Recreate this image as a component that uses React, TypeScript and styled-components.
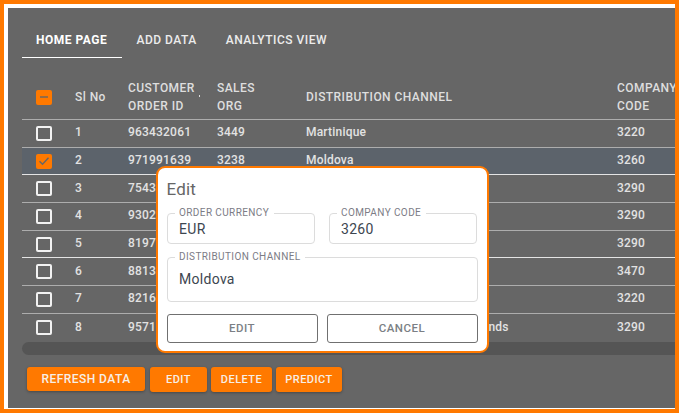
import * as React from 'react';
import styled, { createGlobalStyle } from 'styled-components';

const orange = '#ff7900';

const GlobalStyle = createGlobalStyle`
  html, body {
    margin: 0;
    padding: 0;
    background: #fff;
    font-family: Roboto, "Liberation Sans", sans-serif;
  }
`;

const Frame = styled.div`
  position: relative;
  box-sizing: border-box;
  width: 679px;
  height: 413px;
  overflow: hidden;
  border: 4px solid ${orange};
  padding: 4px 0 1px 4px;
  background: #fff;
`;

const Panel = styled.div`
  box-sizing: border-box;
  height: 100%;
  padding: 0 0 0 14px;
  background: #666;
  overflow: hidden;
`;

const Tabs = styled.nav`
  display: flex;
  height: 50px;
`;

const Tab = styled.div<{ $active?: boolean }>`
  box-sizing: border-box;
  height: 50px;
  padding: 25px 14.5px 0;
  font-size: 12px;
  line-height: 14px;
  font-weight: ${p => (p.$active ? 700 : 500)};
  letter-spacing: 0.5px;
  white-space: nowrap;
  color: ${p => (p.$active ? '#fff' : '#ececec')};
  border-bottom: ${p => (p.$active ? '1px solid #fff' : '1px solid transparent')};
  &:first-child {
    width: 100px;
    padding-left: 14px;
  }
`;

const Table = styled.div`
  margin-top: 21px;
  overflow: hidden;
`;

const Row = styled.div<{ $selected?: boolean; $head?: boolean; $bright?: boolean }>`
  position: relative;
  display: grid;
  grid-template-columns: 44px 53px 89px 89px 311px 1fr;
  align-items: center;
  box-sizing: border-box;
  height: ${p => (p.$head ? '41px' : '27.7px')};
  padding-bottom: ${p => (p.$head ? '4px' : '0')};
  background: ${p => (p.$selected ? '#5c636b' : 'transparent')};
  border-bottom: 1px solid ${p => (p.$bright ? '#e4e4e4' : '#adadad')};
`;

const LastRow = styled(Row)`
  border-bottom: 0;
`;

const Cell = styled.div<{ $head?: boolean }>`
  padding-left: 9px;
  padding-bottom: ${p => (p.$head ? '0' : '2px')};
  font-size: 12px;
  font-weight: 500;
  line-height: 18px;
  letter-spacing: ${p => (p.$head ? '0.45px' : '0.2px')};
  white-space: nowrap;
  color: ${p => (p.$head ? '#dedede' : '#e2e2e2')};
`;

const CheckCell = styled.div`
  display: flex;
  justify-content: center;
`;

const Box = styled.span<{ $on?: boolean }>`
  display: flex;
  align-items: center;
  justify-content: center;
  box-sizing: border-box;
  width: 16px;
  height: 15px;
  border-radius: 2px;
  background: ${p => (p.$on ? orange : 'transparent')};
  border: ${p => (p.$on ? '0' : '2px solid #f2f2f2')};
`;

const SortDot = styled.span`
  position: absolute;
  left: 176.5px;
  top: 16px;
  width: 1.5px;
  height: 1.5px;
  background: #ddd;
`;

const Scrollbar = styled.div`
  height: 13px;
  border-radius: 7px 0 0 7px;
  background: #555;
`;

const Actions = styled.div`
  display: flex;
  align-items: center;
  gap: 4px;
  margin-top: 12px;
  padding-left: 5px;
`;

const ActionButton = styled.button<{ $width: number; $large?: boolean }>`
  box-sizing: border-box;
  width: ${p => p.$width}px;
  height: ${p => (p.$large ? '24px' : '25px')};
  margin-right: ${p => (p.$large ? '1px' : '0')};
  padding: 0;
  border: 0;
  border-radius: 3px;
  background: ${orange};
  color: #f7efe6;
  font-family: inherit;
  font-size: ${p => (p.$large ? '12px' : '11px')};
  font-weight: 500;
  letter-spacing: 0.45px;
  box-shadow: 0 1px 3px rgba(0, 0, 0, 0.3);
`;

const Modal = styled.div`
  position: absolute;
  left: 152px;
  top: 162px;
  box-sizing: border-box;
  width: 333px;
  height: 187px;
  display: flex;
  flex-direction: column;
  padding: 10.5px 9.5px 0 8.5px;
  background: #fff;
  border: 2.5px solid ${orange};
  border-radius: 9px;
`;

const ModalTitle = styled.h2`
  margin: 0;
  font-size: 17px;
  line-height: 20px;
  font-weight: 400;
  letter-spacing: 0.2px;
  color: #666;
`;

const FieldRow = styled.div`
  display: grid;
  grid-template-columns: 148px 148px;
  gap: 14px;
  margin-top: 14px;
`;

const Field = styled.div<{ $tall?: boolean }>`
  position: relative;
  box-sizing: border-box;
  flex: ${p => (p.$tall ? '0 0 45px' : '1')};
  height: ${p => (p.$tall ? '45px' : '31px')};
  margin-top: ${p => (p.$tall ? '13px' : '0')};
  padding: ${p => (p.$tall ? '13px 11.5px 0' : '7px 11.5px 0')};
  border: 1px solid #dcdcdc;
  border-radius: 4px;
  font-size: 14px;
  line-height: 16px;
  letter-spacing: 0.3px;
  color: #3d4650;
`;

const FieldLabel = styled.span`
  position: absolute;
  left: 7px;
  top: -6px;
  padding: 0 4.5px;
  background: #fff;
  font-size: 10px;
  line-height: 10px;
  letter-spacing: 0.4px;
  white-space: nowrap;
  color: #7c7c86;
`;

const ModalActions = styled.div`
  display: flex;
  gap: 9px;
  margin-top: 12px;
`;

const ModalButton = styled.button`
  box-sizing: border-box;
  flex: 1;
  height: 29px;
  padding: 0;
  background: #fff;
  border: 1px solid #707070;
  border-radius: 3px;
  font-family: inherit;
  font-size: 11.5px;
  font-weight: 500;
  letter-spacing: 0.5px;
  color: #7b7f85;
`;

// Only what shows around the dialog: the rest of these rows is covered by it.
const rows = [
  ['1', '963432061', '3449', 'Martinique', '3220'],
  ['2', '971991639', '3238', 'Moldova', '3260'],
  ['3', '7543', '', '', '3290'],
  ['4', '9302', '', '', '3290'],
  ['5', '8197', '', '', '3290'],
  ['6', '8813', '', '', '3470'],
  ['7', '8216', '', '', '3220'],
  ['8', '9571', '', 'United States Minor Outlying Islands', '3290'],
];

const Minus = () => (
  <svg width="10" height="10" viewBox="0 0 10 10">
    <path d="M1 5h8" stroke="#666" strokeWidth="1.4" />
  </svg>
);

const Check = () => (
  <svg width="12" height="12" viewBox="0 0 12 12" fill="none">
    <path d="M1.5 6.2l3 3 6-6.4" stroke="#666" strokeWidth="1.4" />
  </svg>
);

const App = () => (
  <>
    <GlobalStyle />
    <Frame>
      <Panel>
        <Tabs>
          <Tab $active>HOME PAGE</Tab>
          <Tab>ADD DATA</Tab>
          <Tab>ANALYTICS VIEW</Tab>
        </Tabs>
        <Table>
          <Row $head>
            <CheckCell>
              <Box $on>
                <Minus />
              </Box>
            </CheckCell>
            <Cell $head>Sl No</Cell>
            <Cell $head>
              CUSTOMER
              <br />
              ORDER ID
            </Cell>
            <Cell $head>
              SALES
              <br />
              ORG
            </Cell>
            <Cell $head>DISTRIBUTION CHANNEL</Cell>
            <Cell $head>
              COMPANY
              <br />
              CODE
            </Cell>
            <SortDot />
          </Row>
          {rows.map((r, i) => {
            const RowType = i === rows.length - 1 ? LastRow : Row;
            return (
              <RowType key={r[0]} $selected={i === 1} $bright={i === 1 || i === 4}>
                <CheckCell>
                  <Box $on={i === 1}>{i === 1 && <Check />}</Box>
                </CheckCell>
                {r.map((v, j) => (
                  <Cell key={j}>{v}</Cell>
                ))}
              </RowType>
            );
          })}
        </Table>
        <Scrollbar />
        <Actions>
          <ActionButton $width={118} $large>
            REFRESH DATA
          </ActionButton>
          <ActionButton $width={57}>EDIT</ActionButton>
          <ActionButton $width={61}>DELETE</ActionButton>
          <ActionButton $width={66}>PREDICT</ActionButton>
        </Actions>
      </Panel>
      <Modal>
        <ModalTitle>Edit</ModalTitle>
        <FieldRow>
          <Field>
            <FieldLabel>ORDER CURRENCY</FieldLabel>
            EUR
          </Field>
          <Field>
            <FieldLabel>COMPANY CODE</FieldLabel>
            3260
          </Field>
        </FieldRow>
        <Field $tall>
          <FieldLabel>DISTRIBUTION CHANNEL</FieldLabel>
          Moldova
        </Field>
        <ModalActions>
          <ModalButton>EDIT</ModalButton>
          <ModalButton>CANCEL</ModalButton>
        </ModalActions>
      </Modal>
    </Frame>
  </>
);

export default App;
